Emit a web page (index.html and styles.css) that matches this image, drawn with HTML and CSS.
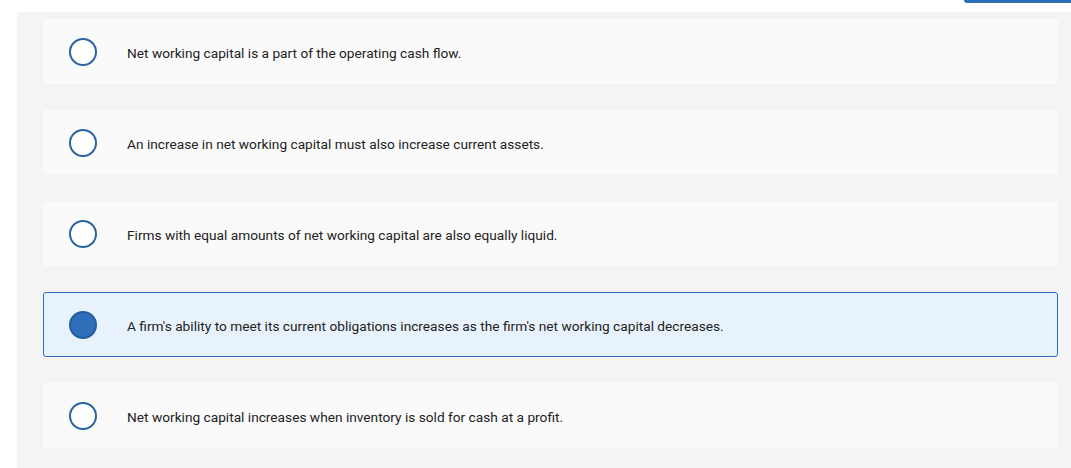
FILE: index.html
```html
<!doctype html>
<html lang="en">
    <head>
        <meta charset="utf-8">
        <link rel="stylesheet" href="styles.css">
    </head>
    <body>
        <div class="top-bar">
            <div class="tab"></div>
        </div>
        <div id="container">
            <label class="choice">
                <span class="radio"></span>
                <span class="choice-text">Net working capital is a part of the operating cash flow.</span>
            </label>
            <label class="choice">
                <span class="radio"></span>
                <span class="choice-text">An increase in net working capital must also increase current assets.</span>
            </label>
            <label class="choice">
                <span class="radio"></span>
                <span class="choice-text">Firms with equal amounts of net working capital are also equally liquid.</span>
            </label>
            <label class="choice selected">
                <span class="radio"></span>
                <span class="choice-text">A firm's ability to meet its current obligations increases as the firm's net working capital decreases.</span>
            </label>
            <label class="choice">
                <span class="radio"></span>
                <span class="choice-text">Net working capital increases when inventory is sold for cash at a profit.</span>
            </label>
        </div>
    </body>
</html>
```

FILE: styles.css
```css
html, body{
    margin: 0px;
    padding: 0px;
    width: 100%;
    height: 100%;
    background-color: #ffffff;
    overflow: hidden;
}
body{
    font-family: "Roboto", "Liberation Sans", sans-serif;
    font-size: 13.7px;
    color: #222222;
}
.top-bar{
    height: 12px;
    display: flex;
    justify-content: flex-end;
}
.tab{
    width: 107px;
    height: 3px;
    background: #2f6fba;
    border-bottom-left-radius: 3px;
}
#container{
    margin-left: 17px;
    background-color: #f4f4f4;
    padding: 7px 13px 0px 26px;
    display: flex;
    flex-direction: column;
    gap: 26px;
    height: 456px;
    box-sizing: border-box;
}
.choice{
    display: flex;
    align-items: center;
    height: 65px;
    flex-shrink: 0;
    box-sizing: border-box;
    padding-left: 25px;
    background: #fafafa;
    border: 1px solid #fafafa;
    border-radius: 3px;
    cursor: pointer;
}
.choice.selected{
    background: #e8f2fc;
    border-color: #2f6fba;
}
.radio{
    width: 28px;
    height: 28px;
    box-sizing: border-box;
    border: 2px solid #2a64a0;
    border-radius: 50%;
    background: #ffffff;
    flex-shrink: 0;
}
.selected .radio{
    background: #2f6fba;
    border-color: #245d9e;
}
.choice-text{
    margin-left: 30px;
    padding-top: 2px;
}
```
